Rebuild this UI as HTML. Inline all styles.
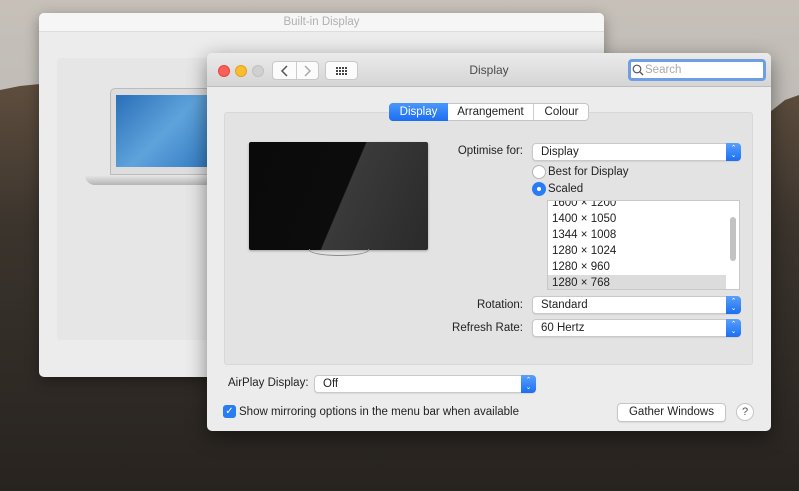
<!DOCTYPE html>
<html><head><meta charset="utf-8"><style>
*{box-sizing:border-box;margin:0;padding:0}
body{width:799px;height:491px;overflow:hidden;position:relative;font-family:"Liberation Sans",sans-serif;font-size:11.5px;color:#222;background:#bdb8b1}
.abs{position:absolute}
.sel{position:absolute;background:#fff;border:1px solid #c9c9c9;border-radius:4px;height:18px;padding-left:8px;line-height:16px;font-size:11.5px;box-shadow:0 1px 1px rgba(0,0,0,.08)}
.sel .ar{position:absolute;right:-1px;top:-1px;width:15px;height:18px;background:linear-gradient(#5aa0fb,#1a6ff2);border-radius:0 4px 4px 0;color:#fff;font-size:7px;line-height:7px;text-align:center;padding-top:2px}
.lbl{position:absolute;text-align:right;font-size:11.5px}
</style></head><body>
<svg class="abs" style="left:0;top:0" width="799" height="491">
<defs><linearGradient id="sky" x1="0" y1="0" x2="0" y2="1"><stop offset="0" stop-color="#c6c0b8"/><stop offset="1" stop-color="#a9adb4"/></linearGradient>
<linearGradient id="mt" x1="0" y1="0" x2="0" y2="1"><stop offset="0" stop-color="#5e4e3e"/><stop offset=".35" stop-color="#3b342d"/><stop offset="1" stop-color="#27231f"/></linearGradient></defs>
<rect width="799" height="491" fill="url(#sky)"/>
<polygon points="0,90 20,86 40,84 300,220 600,150 770,112 785,100 799,95 799,491 0,491" fill="url(#mt)"/>
</svg>
<!-- back window -->
<div class="abs" style="left:39px;top:13px;width:565px;height:364px;background:#ececec;border-radius:5px;box-shadow:0 4px 14px rgba(0,0,0,.35)">
 <div class="abs" style="left:0;top:0;width:565px;height:19px;background:#f6f6f6;border-bottom:1px solid #ddd;border-radius:5px 5px 0 0;text-align:center;line-height:19px;color:#b0b0b0;font-size:11.5px">Built-in Display</div>
 <div class="abs" style="left:18px;top:45px;width:520px;height:282px;background:#e6e6e6;border-radius:3px"></div>
 <div class="abs" style="left:71px;top:75px;width:110px;height:87px;background:#ddd;border-radius:5px 5px 0 0;border:1px solid #bbb">
  <div class="abs" style="left:5px;top:6px;width:99px;height:72px;background:linear-gradient(135deg,#2a6fb8,#5fa3dc 50%,#2f78c0)"></div>
 </div>
 <div class="abs" style="left:46px;top:162px;width:150px;height:10px;background:linear-gradient(#e8e8e8,#b5b5b5);border-radius:0 0 10px 10px"></div>
</div>
<!-- front window -->
<div class="abs" style="left:207px;top:53px;width:564px;height:378px;background:#ececec;border-radius:5px;box-shadow:0 6px 20px rgba(0,0,0,.45);overflow:hidden">
 <div class="abs" style="left:0;top:0;width:564px;height:34px;background:linear-gradient(#ebebeb,#d5d5d5);border-bottom:1px solid #bdbdbd"></div>
 <div class="abs" style="left:11px;top:12px;width:12px;height:12px;border-radius:50%;background:#fc5f57;border:1px solid #e2463f"></div>
 <div class="abs" style="left:28px;top:12px;width:12px;height:12px;border-radius:50%;background:#fdbc2e;border:1px solid #dea123"></div>
 <div class="abs" style="left:45px;top:12px;width:12px;height:12px;border-radius:50%;background:#d0d0d0;border:1px solid #c0c0c0"></div>
 <div class="abs" style="left:65px;top:8px;width:47px;height:19px;background:#fbfbfb;border:1px solid #c8c8c8;border-radius:4px"><div class="abs" style="left:23px;top:0;width:1px;height:17px;background:#ccc"></div>
  <svg class="abs" style="left:0;top:0" width="46" height="18"><path d="M14 4 L9 9 L14 14" stroke="#555" stroke-width="1.5" fill="none"/><path d="M32 4 L37 9 L32 14" stroke="#aaa" stroke-width="1.5" fill="none"/></svg></div>
 <div class="abs" style="left:118px;top:8px;width:33px;height:19px;background:#fbfbfb;border:1px solid #c8c8c8;border-radius:4px">
  <svg class="abs" style="left:10px;top:5px" width="14" height="10"><g fill="#444"><rect x="0" y="0" width="2" height="2"/><rect x="3" y="0" width="2" height="2"/><rect x="6" y="0" width="2" height="2"/><rect x="9" y="0" width="2" height="2"/><rect x="0" y="3" width="2" height="2"/><rect x="3" y="3" width="2" height="2"/><rect x="6" y="3" width="2" height="2"/><rect x="9" y="3" width="2" height="2"/><rect x="0" y="6" width="2" height="2"/><rect x="3" y="6" width="2" height="2"/><rect x="6" y="6" width="2" height="2"/><rect x="9" y="6" width="2" height="2"/></g></svg></div>
 <div class="abs" style="left:0;top:10px;width:564px;text-align:center;color:#4a4a4a;font-size:12px">Display</div>
 <div class="abs" style="left:421px;top:6px;width:138px;height:22px;background:#fff;border:3px solid #6e9fe6;border-radius:4px;color:#aaa;font-size:11.5px;line-height:16px;padding-left:14px">Search
  <svg class="abs" style="left:1px;top:2px" width="12" height="12"><circle cx="5" cy="5" r="3.8" stroke="#555" stroke-width="1.2" fill="none"/><path d="M8 8 L11 11" stroke="#555" stroke-width="1.3"/></svg></div>
 <!-- inner box -->
 <div class="abs" style="left:17px;top:59px;width:529px;height:253px;background:#e3e3e3;border:1px solid #d8d8d8;border-radius:3px"></div>
 <div class="abs" style="left:182px;top:50px;width:200px;height:18px;background:#fff;border:1px solid #c5c5c5;border-radius:4px;font-size:11.5px;line-height:16px">
  <div class="abs" style="left:-1px;top:-1px;width:59px;height:18px;background:linear-gradient(#4a97fb,#1a6ef2);border-radius:4px 0 0 4px;color:#fff;text-align:center;line-height:18px">Display</div>
  <div class="abs" style="left:58px;top:0;width:86px;text-align:center;border-right:1px solid #ccc">Arrangement</div>
  <div class="abs" style="left:144px;top:0;width:55px;text-align:center">Colour</div>
 </div>
 <!-- TV -->
 <div class="abs" style="left:42px;top:89px;width:179px;height:108px;border-radius:2px;background:linear-gradient(113deg,#0a0a0a 0,#0c0c0c 52%,#3a3a3a 52.5%,#2a2a2a 100%);box-shadow:0 1px 2px rgba(0,0,0,.3)"></div>
 <div class="abs" style="left:102px;top:196px;width:60px;height:7px;border:1.5px solid #8a8a8a;border-top:none;border-radius:0 0 30px 30px/0 0 6px 6px"></div>
 <!-- controls -->
 <div class="lbl" style="left:220px;top:92px;width:96px">Optimise for:</div>
 <div class="sel" style="left:325px;top:90px;width:209px">Display<div class="ar">&#8963;<br>&#8964;</div></div>
 <div class="abs" style="left:325px;top:112px;width:14px;height:14px;border-radius:50%;background:#fff;border:1px solid #b5b5b5"></div>
 <div class="abs" style="left:341px;top:113px">Best for Display</div>
 <div class="abs" style="left:325px;top:129px;width:14px;height:14px;border-radius:50%;background:#2a7cf4"><div class="abs" style="left:5px;top:5px;width:4px;height:4px;border-radius:50%;background:#fff"></div></div>
 <div class="abs" style="left:341px;top:130px">Scaled</div>
 <div class="abs" style="left:340px;top:147px;width:193px;height:90px;background:#fff;border:1px solid #c8c8c8;overflow:hidden;font-size:11.5px;line-height:16px">
  <div class="abs" style="left:0;top:74px;width:178px;height:16px;background:#dcdcdc"></div>
  <div class="abs" style="left:4px;top:-6px">1600 × 1200<br>1400 × 1050<br>1344 × 1008<br>1280 × 1024<br>1280 × 960<br>1280 × 768</div>
  <div class="abs" style="left:182px;top:16px;width:6px;height:44px;background:#c2c2c2;border-radius:3px"></div>
 </div>
 <div class="lbl" style="left:220px;top:246px;width:96px">Rotation:</div>
 <div class="sel" style="left:325px;top:243px;width:209px">Standard<div class="ar">&#8963;<br>&#8964;</div></div>
 <div class="lbl" style="left:200px;top:269px;width:116px">Refresh Rate:</div>
 <div class="sel" style="left:325px;top:266px;width:209px">60 Hertz<div class="ar">&#8963;<br>&#8964;</div></div>
 <div class="abs" style="left:21px;top:324px">AirPlay Display:</div>
 <div class="sel" style="left:107px;top:322px;width:222px">Off<div class="ar">&#8963;<br>&#8964;</div></div>
 <div class="abs" style="left:16px;top:352px;width:13px;height:13px;border-radius:3px;background:#2a7cf4;color:#fff;font-size:10px;line-height:13px;text-align:center">✓</div>
 <div class="abs" style="left:32px;top:353px">Show mirroring options in the menu bar when available</div>
 <div class="abs" style="left:410px;top:350px;width:109px;height:19px;background:#fff;border:1px solid #c6c6c6;border-radius:4px;text-align:center;line-height:17px;box-shadow:0 1px 1px rgba(0,0,0,.08)">Gather Windows</div>
 <div class="abs" style="left:529px;top:350px;width:18px;height:18px;border-radius:50%;background:#fff;border:1px solid #c6c6c6;text-align:center;line-height:16px;font-size:11px;color:#555">?</div>
</div>
</body></html>
